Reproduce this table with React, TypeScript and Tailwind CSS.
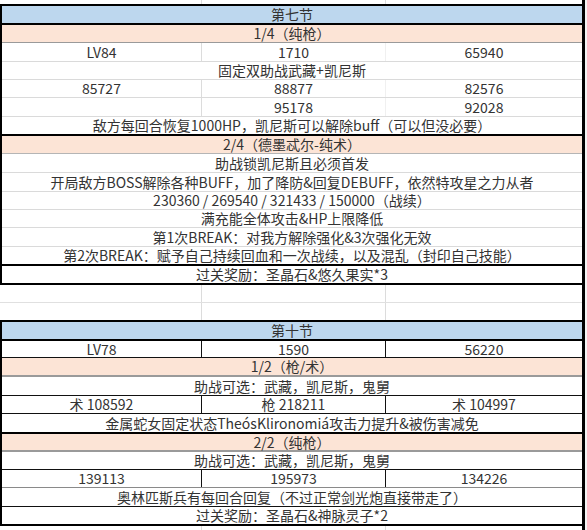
import React from "react";

type Cell = string;
type RowDef = {
  h: string;
  cls: string;
  cells: Cell[];
  sep?: string;
};

const font = "font-['Noto_Sans_CJK_SC','Noto_Sans',sans-serif]";

const t1: RowDef[] = [
  { h: "h-[19px]", cls: "bg-[#bdd7ee] border-b-2 border-black", cells: ["第七节"] },
  { h: "h-[18px]", cls: "bg-[#fce4d6] border-b border-[#9a9a9a]", cells: ["1/4（纯枪）"] },
  { h: "h-[19px]", cls: "border-b border-[#dadada]", cells: ["LV84", "1710", "65940"], sep: "light" },
  { h: "h-[18px]", cls: "border-b border-[#dadada]", cells: ["固定双助战武藏+凯尼斯"] },
  { h: "h-[18px]", cls: "border-b border-[#dadada]", cells: ["85727", "88877", "82576"], sep: "light" },
  { h: "h-[19px]", cls: "border-b border-[#dadada]", cells: ["", "95178", "92028"], sep: "light" },
  { h: "h-[19px]", cls: "border-b-2 border-black", cells: ["敌方每回合恢复1000HP，凯尼斯可以解除buff（可以但没必要）"] },
  { h: "h-[18px]", cls: "bg-[#fce4d6] border-b border-[#b5b5b5]", cells: ["2/4（德墨忒尔-纯术）"] },
  { h: "h-[19px]", cls: "border-b border-[#dadada]", cells: ["助战锁凯尼斯且必须首发"] },
  { h: "h-[19px]", cls: "border-b border-[#dadada]", cells: ["开局敌方BOSS解除各种BUFF，加了降防&回复DEBUFF，依然特攻星之力从者"] },
  { h: "h-[18px]", cls: "border-b border-[#dadada]", cells: ["230360 / 269540 / 321433 / 150000（战续）"] },
  { h: "h-[18px]", cls: "border-b border-[#dadada]", cells: ["满充能全体攻击&HP上限降低"] },
  { h: "h-[19px]", cls: "border-b border-[#dadada]", cells: ["第1次BREAK：对我方解除强化&3次强化无效"] },
  { h: "h-[19px]", cls: "border-b-2 border-black", cells: ["第2次BREAK：赋予自己持续回血和一次战续，以及混乱（封印自己技能）"] },
  { h: "h-[19px]", cls: "border-b-2 border-black", cells: ["过关奖励：圣晶石&悠久果实*3"] },
];

const t2: RowDef[] = [
  { h: "h-[19px]", cls: "bg-[#bdd7ee] border-b-2 border-black", cells: ["第十节"] },
  { h: "h-[17px]", cls: "border-b border-[#111]", cells: ["LV78", "1590", "56220"], sep: "dark" },
  { h: "h-[19px]", cls: "bg-[#fce4d6] border-b-2 border-[#9a9a9a]", cells: ["1/2（枪/术）"] },
  { h: "h-[19px]", cls: "border-b border-[#111]", cells: ["助战可选：武藏，凯尼斯，鬼舅"] },
  { h: "h-[18px]", cls: "border-b border-[#111]", cells: ["术 108592", "枪 218211", "术 104997"], sep: "dark" },
  { h: "h-[20px]", cls: "border-b-2 border-black", cells: ["金属蛇女固定状态TheósKlironomiá攻击力提升&被伤害减免"] },
  { h: "h-[18px]", cls: "bg-[#fce4d6] border-b-2 border-[#9a9a9a]", cells: ["2/2（纯枪）"] },
  { h: "h-[18px]", cls: "border-b border-[#111]", cells: ["助战可选：武藏，凯尼斯，鬼舅"] },
  { h: "h-[18px]", cls: "border-b border-[#8a8a8a]", cells: ["139113", "195973", "134226"], sep: "dark" },
  { h: "h-[19px]", cls: "border-b border-[#111]", cells: ["奥林匹斯兵有每回合回复（不过正常剑光炮直接带走了）"] },
  { h: "h-[19px]", cls: "border-b-2 border-black", cells: ["过关奖励：圣晶石&神脉灵子*2"] },
];

function Txt({ children }: { children: React.ReactNode }) {
  return <span className="block leading-[15px] h-[15px] overflow-visible">{children}</span>;
}

function Row({ r }: { r: RowDef }) {
  if (r.cells.length === 1) {
    return (
      <div className={`${r.h} ${r.cls} box-border flex items-center justify-center whitespace-nowrap`}>
        <Txt>{r.cells[0]}</Txt>
      </div>
    );
  }
  const s1 = r.sep === "dark" ? "border-r border-[#111]" : "border-r border-[#dcdcdc]";
  const s2 = r.sep === "dark" ? "border-r border-[#111]" : "border-r border-[#f0f0f0]";
  return (
    <div className={`${r.h} ${r.cls} box-border grid grid-cols-[200px_184px_196px]`}>
      <div className={`${s1} flex items-center justify-center whitespace-nowrap`}>
        <Txt>{r.cells[0]}</Txt>
      </div>
      <div className={`${s2} flex items-center justify-center whitespace-nowrap`}>
        <Txt>{r.cells[1]}</Txt>
      </div>
      <div className="flex items-center justify-center whitespace-nowrap">
        <Txt>{r.cells[2]}</Txt>
      </div>
    </div>
  );
}

function Gap({ h, cls }: { h: string; cls: string }) {
  return (
    <div className={`${h} ${cls} box-border grid grid-cols-[202px_184px_196px]`}>
      <div className="border-r border-[#dcdcdc]" />
      <div className="border-r border-[#dcdcdc]" />
      <div />
    </div>
  );
}

export default function App() {
  return (
    <div className={`w-[587px] h-[530px] bg-white flex overflow-hidden text-[14px] text-[#333] ${font}`}>
      <div className="w-[582px] flex flex-col">
        <Gap h="h-[4px]" cls="" />
        <div className="border-l-2 border-t-2 border-black flex flex-col">
          {t1.map((r, i) => (
            <Row key={i} r={r} />
          ))}
        </div>
        <Gap h="h-[18px]" cls="border-b border-[#e0e0e0]" />
        <Gap h="h-[17px]" cls="" />
        <div className="border-l-2 border-t-2 border-black flex flex-col">
          {t2.map((r, i) => (
            <Row key={i} r={r} />
          ))}
        </div>
        <Gap h="h-[4px]" cls="" />
      </div>
      <div className="w-[3px] bg-black" />
      <div className="w-[2px] bg-[#f4f4f4]" />
    </div>
  );
}
